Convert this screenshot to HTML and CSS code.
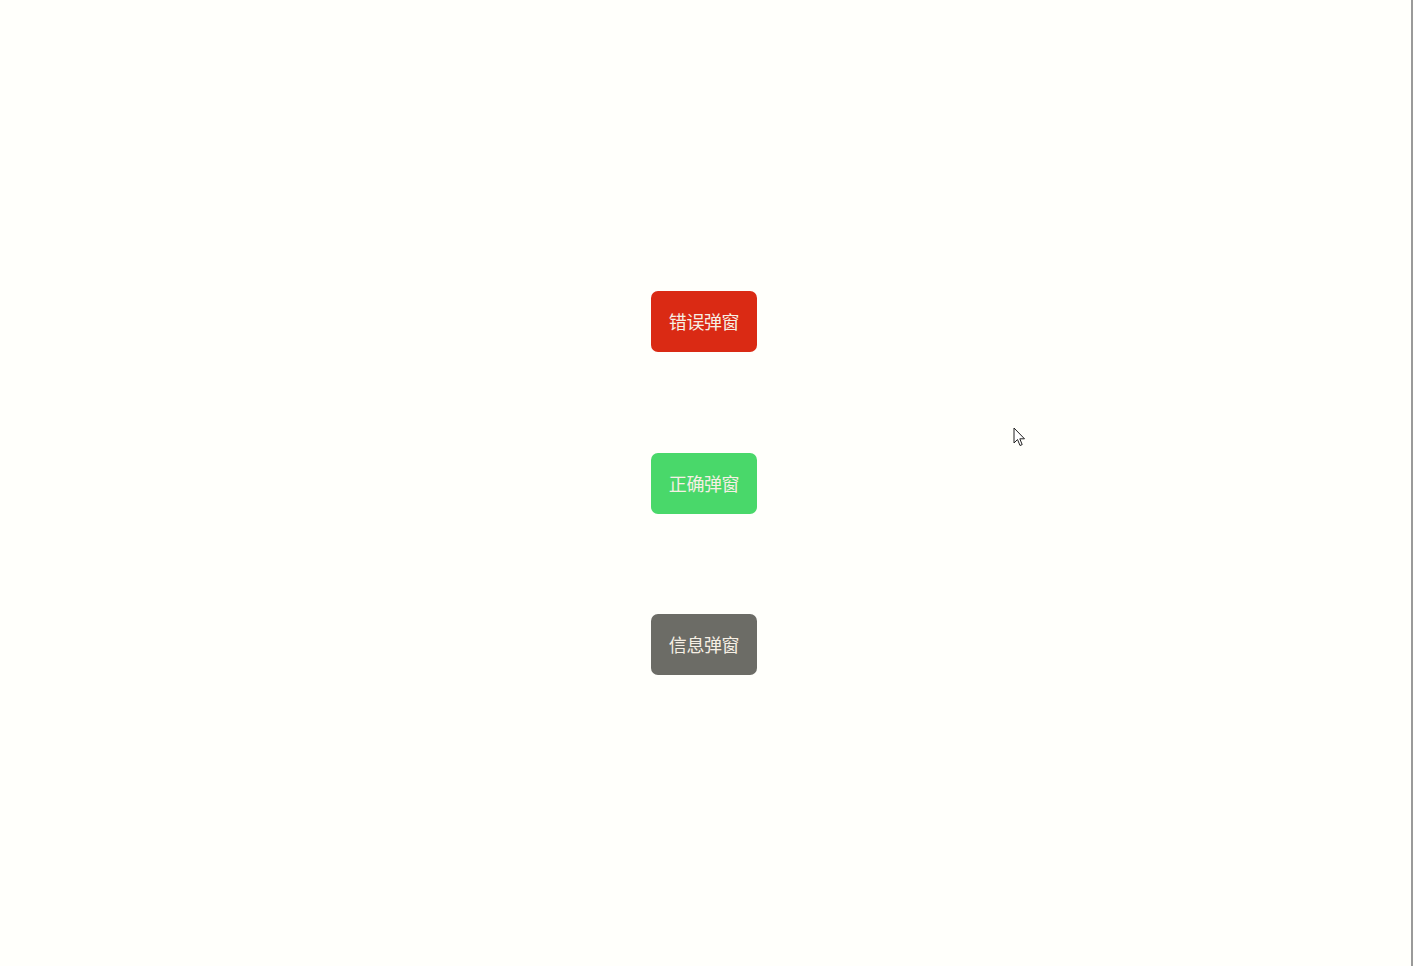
FILE: index.html
```html
<!DOCTYPE html>
<html lang="zh-CN">
<head>
<meta charset="utf-8">
<title>弹窗</title>
<link rel="stylesheet" href="styles.css">
</head>
<body>
<div class="page">
  <main class="stage">
    <button class="btn btn-error">错误弹窗</button>
    <button class="btn btn-success">正确弹窗</button>
    <button class="btn btn-info">信息弹窗</button>
  </main>
  <div class="edge"></div>
</div>
<svg class="cursor" width="13" height="20" viewBox="0 0 13 20">
  <path d="M1 1 L1 16 L4.5 12.5 L7 18.5 L9.2 17.6 L6.8 11.8 L11.5 11.8 Z" fill="#ffffff" stroke="#222" stroke-width="1" stroke-linejoin="miter"/>
</svg>
</body>
</html>
```
FILE: styles.css
```css
html, body {
  margin: 0;
  padding: 0;
  background: #fffffb;
}
body {
  font-family: "Noto Sans CJK SC", "Noto Sans", sans-serif;
  height: 966px;
  overflow: hidden;
}
.page {
  display: flex;
  height: 966px;
}
.stage {
  width: 1408px;
  display: flex;
  flex-direction: column;
  align-items: center;
  padding-top: 291px;
  gap: 100.5px;
  box-sizing: border-box;
}
.edge {
  margin-left: 3px;
  width: 2px;
  background: #9a9a9a;
}
.btn {
  width: 106px;
  height: 61px;
  border: none;
  border-radius: 7px;
  font-family: "Noto Sans CJK SC", sans-serif;
  font-size: 18px;
  line-height: 1;
  letter-spacing: -0.4px;
  color: #f6efe4;
  padding: 0 0 1px;
  cursor: pointer;
}
.btn-error { background: #da2a14; }
.btn-success { background: #49d86a; }
.btn-info { background: #6c6c66; }
.cursor {
  position: absolute;
  left: 1013px;
  top: 427px;
}
```
